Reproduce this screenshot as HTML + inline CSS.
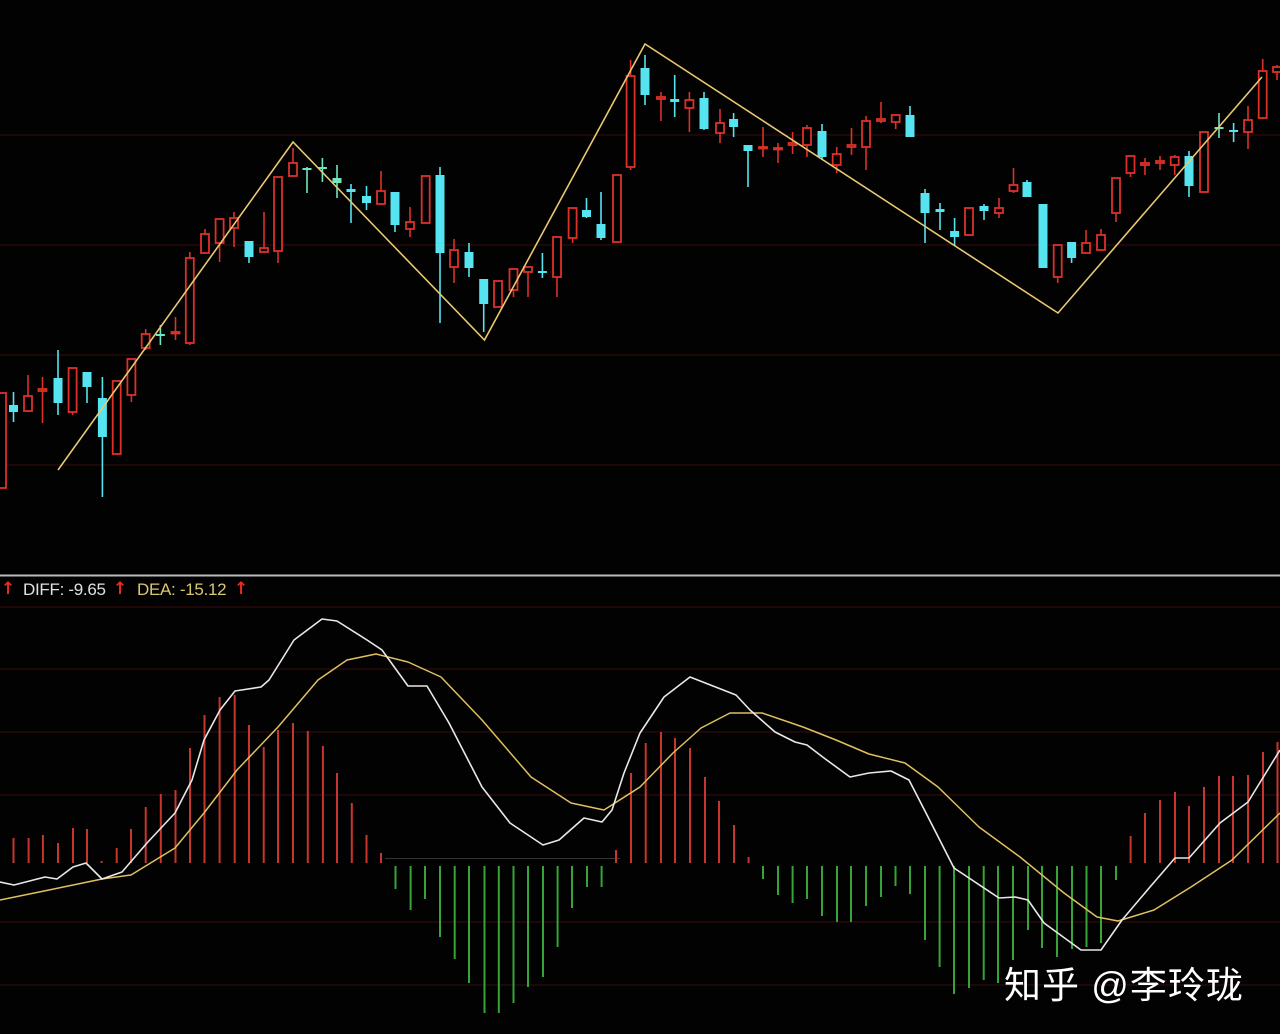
<!DOCTYPE html>
<html><head><meta charset="utf-8"><style>
html,body{margin:0;padding:0;background:#000;}
#c{position:relative;width:1280px;height:1034px;overflow:hidden;background:#020202;}
svg{position:absolute;left:0;top:0;}
.lab{position:absolute;top:580px;font:17px "Liberation Sans",sans-serif;white-space:nowrap;letter-spacing:-0.3px;}
.ar{position:absolute;top:579px;font:bold 17px "DejaVu Sans",sans-serif;color:#ee2a1e;}
.wm{position:absolute;left:1004px;top:955px;font:37px "Liberation Sans","Noto Sans CJK SC",sans-serif;color:#fff;letter-spacing:1px;}
</style></head><body><div id="c">
<svg id="s" width="1280" height="1034" xmlns="http://www.w3.org/2000/svg"></svg>
<div class="ar" style="left:1px">↑</div>
<div class="lab" style="left:23px;color:#e0e0e0">DIFF: -9.65</div>
<div class="ar" style="left:113px">↑</div>
<div class="lab" style="left:137px;color:#d8c870">DEA: -15.12</div>
<div class="ar" style="left:234px">↑</div>
<div class="wm">知乎 @李玲珑</div>
</div>
<script>
var s=document.getElementById('s'),h='';
[135,245,355,465,607,669,732,795,922,985].forEach(function(y){h+='<line x1="0" x2="1280" y1="'+y+'" y2="'+y+'" stroke="#3a0e0c" stroke-width="1"/>';});
h+='<line x1="0" x2="1280" y1="575.5" y2="575.5" stroke="#bbb" stroke-width="2"/>';
h+='<line x1="385" x2="620" y1="858.5" y2="858.5" stroke="#333" stroke-width="1"/>';
var C=[[2,393,488,393,488,'r'],[13.5,405,412,392,422,'c'],[28,396,411,375,411,'r'],[42.5,389,391,377,423,'r'],[58,378,403,350,415,'c'],[72.6,368,412,368,415,'r'],[87,372,387,372,403,'c'],[102.4,398,437,377,497,'c'],[116.7,381,454,381,454,'r'],[131.4,359,395,359,402,'r'],[145.7,334,348,329,350,'r'],[160.4,334,336,325,345,'g'],[175.5,332,333,317,340,'r'],[189.8,258,343,252,345,'r'],[205,234,253,229,253,'r'],[219.6,219,243,219,262,'r'],[234,218,228,212,247,'r'],[249,241,257,241,263,'c'],[264,248,252,212,253,'r'],[278,177,251,177,263,'r'],[293,163,176,148,176,'r'],[307,168,170,167,193,'g'],[322.4,167,168,158,182,'g'],[337,178,183,165,198,'g'],[351,189,192,184,223,'c'],[366.5,196,203,186,210,'c'],[381,191,204,171,204,'r'],[395,192,225,192,232,'c'],[410,222,229,207,237,'r'],[425.7,176,223,176,223,'r'],[440,175,253,167,323,'c'],[454,250,267,239,283,'r'],[469,252,268,243,277,'c'],[483.7,279,304,279,332,'c'],[498,281,307,281,307,'r'],[513.5,269,290,269,297,'r'],[528,267,272,267,297,'r'],[542.4,271,273,253,278,'c'],[557,237,277,237,297,'r'],[572.6,208,238,208,243,'r'],[586.5,210,217,198,218,'c'],[601,224,238,192,240,'c'],[617,175,242,175,242,'r'],[630.6,76,167,60,170,'r'],[645,68,95,55,105,'c'],[661,97,99,92,121,'r'],[674.7,99,102,75,117,'c'],[689.4,100,108,92,132,'r'],[704,98,129,92,130,'c'],[720,123,133,109,143,'r'],[733.6,119,127,113,137,'c'],[748,145,151,145,187,'c'],[763,147,148,127,157,'r'],[778,148,149,143,163,'r'],[792.6,143,145,132,154,'r'],[807,128,145,125,157,'r'],[822,131,157,124,160,'c'],[836.7,154,165,147,173,'r'],[851.5,145,147,128,155,'r'],[866,121,147,116,170,'r'],[881,119,121,102,123,'r'],[895.7,115,122,115,129,'r'],[910,115,137,106,137,'c'],[925,193,213,189,243,'c'],[940,209,212,203,230,'c'],[954.6,231,237,218,245,'c'],[969,208,235,208,235,'r'],[984,206,211,204,220,'c'],[999,208,213,198,218,'r'],[1013.5,185,191,168,193,'r'],[1027,182,197,180,197,'c'],[1043,204,268,204,268,'c'],[1057.7,245,277,245,283,'r'],[1071.6,242,258,242,263,'c'],[1086,243,253,230,253,'r'],[1101,235,250,229,250,'r'],[1116,178,213,178,222,'r'],[1130.5,156,173,156,177,'r'],[1145,163,165,158,175,'r'],[1160,161,163,156,170,'r'],[1174.7,157,165,155,175,'r'],[1189,156,186,151,197,'c'],[1204,132,192,132,192,'r'],[1219,127,129,113,138,'g'],[1233.6,130,131,123,142,'c'],[1248,120,132,106,149,'r'],[1262.7,71,118,59,119,'r'],[1277,67,72,65,80,'r']];
C.forEach(function(k){var x=k[0],t=k[1],b=k[2];
 var col=k[5]=='r'?'#dc3128':(k[5]=='g'?'#6ee6c0':'#56e4f0');
 h+='<line x1="'+x+'" x2="'+x+'" y1="'+k[3]+'" y2="'+k[4]+'" stroke="'+col+'" stroke-width="1.6"/>';
 if(k[5]=='r'){h+='<rect x="'+(x-4)+'" y="'+t+'" width="8" height="'+Math.max(b-t,1.5)+'" fill="#000" stroke="'+col+'" stroke-width="1.8"/>';}
 else{h+='<rect x="'+(x-4.5)+'" y="'+t+'" width="9" height="'+Math.max(b-t,2)+'" fill="'+col+'"/>';}
});
h+='<polyline points="58,470 293,142 484.5,340 645,44 1058,313 1262,77" fill="none" stroke="#e8c870" stroke-width="1.6"/>';
var Z=863;
var R=[[13.5,838],[28.6,838],[42.9,835],[58,843],[73,828],[87,829],[101.6,861],[116.7,848],[131,829],[145.7,807],[160.8,794],[175.5,790],[190,748],[204.5,715],[219.6,697],[234.7,695],[249,725],[263.7,747],[278,730],[293,723],[307.8,731],[322.9,746],[337,773],[351.8,803],[366.5,835],[381,853],[616,850],[631,773],[645.7,743],[661,732],[675,738],[690,748],[705,777],[719,801],[734,825],[748.6,857],[1130.6,836],[1145,813],[1160,800],[1175,792],[1189,806],[1204,787],[1219,776],[1233,776],[1248,775],[1263,752],[1277.5,742]];
R.forEach(function(b){h+='<line x1="'+b[0]+'" x2="'+b[0]+'" y1="'+b[1]+'" y2="'+Z+'" stroke="#c8352c" stroke-width="2"/>';});
var G=[[395.5,889],[410.6,910],[425,899],[440,937],[454.7,959],[469,983],[484.5,1013],[498.8,1013],[513.5,1003],[528,987],[543,977],[557.6,947],[572,908],[587,887],[601.6,887],[763,879],[778,895],[792.6,903],[807,899],[822,916],[837,922],[851,922],[866,906],[881,897],[895.5,886],[910,894],[925,940],[939.6,967],[954,994],[969,988],[983.7,980],[998,983],[1013,960],[1028,930],[1042,948],[1057,957],[1072,949],[1086.5,947],[1101,943],[1116,880]];
G.forEach(function(b){h+='<line x1="'+b[0]+'" x2="'+b[0]+'" y1="866" y2="'+b[1]+'" stroke="#36a436" stroke-width="2"/>';});
h+='<polyline fill="none" stroke="#e0c060" stroke-width="1.5" stroke-linejoin="round" points="0,900 49,890 102,879 131,875 175,848 204,813 237,770 278,727 318,680 347,660 376,654 408,662 441,677 482,720 531,777 571,803 604,810 640,787 673,753 701,728 730,713 762,713 803,727 836,740 869,754 905,763 938,787 979,827 1020,857 1064,893 1097,917 1118,921 1154,910 1191,887 1232,860 1280,813"/>';
h+='<polyline fill="none" stroke="#e8e8e8" stroke-width="1.6" stroke-linejoin="round" points="0,882 14,885 45,877 57,879 73,867 86,863 102,879 122,872 147,843 175,813 192,780 204,740 220,710 235,691 261,687 269,680 294,640 322,619 337,621 367,640 382,650 408,686 427,686 449,723 482,787 510,823 543,845 559,840 584,818 602,822 612,810 624,773 640,733 664,697 690,677 713,686 736,695 750,710 775,732 795,742 807,745 824,758 850,777 869,773 891,771 909,780 926,813 954,868 999,898 1015,897 1028,900 1044,923 1081,950 1101,950 1122,920 1150,887 1175,858 1189,858 1220,823 1248,802 1280,750"/>';
s.innerHTML=h;
</script>
</body></html>
